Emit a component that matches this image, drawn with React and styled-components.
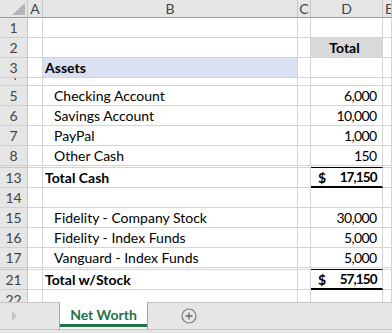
import styled, { createGlobalStyle } from "styled-components";

const Global = createGlobalStyle`
  html, body {
    margin: 0;
    padding: 0;
    background: #ffffff;
  }
  body {
    font-family: Lato, "Open Sans", "Liberation Sans", sans-serif;
  }
`;

const Page = styled.div`
  width: 392px;
  height: 333px;
  display: flex;
  flex-direction: column;
  overflow: hidden;
`;

const Sheet = styled.div`
  flex: 1;
  display: grid;
  grid-template-columns: 28px 15px 255px 13px 72px 1fr;
  grid-auto-rows: min-content;
  overflow: hidden;
`;

const Corner = styled.div`
  height: 18px;
  background: #e6e6e6;
  border-right: 1px solid #c6c6c6;
  border-bottom: 1px solid #9c9c9c;
  box-sizing: border-box;
  display: flex;
  align-items: flex-end;
  justify-content: flex-end;
  padding: 0 2px 2px 0;
`;

const ColHead = styled.div`
  height: 18px;
  background: #e6e6e6;
  border-right: 1px solid #c6c6c6;
  border-bottom: 1px solid #9c9c9c;
  box-sizing: border-box;
  display: flex;
  align-items: center;
  justify-content: ${({ $start }) => ($start ? "flex-start" : "center")};
  padding-left: ${({ $start }) => ($start ? "2px" : "0")};
  font-size: 14px;
  color: #444444;
  overflow: hidden;
`;

const RowHead = styled.div`
  height: ${({ $h }) => $h}px;
  background: #e6e6e6;
  border-right: 1px solid #c6c6c6;
  border-bottom: 1px solid ${({ $h }) => ($h < 6 ? "#c6c6c6" : "#d0d0d0")};
  box-sizing: border-box;
  display: flex;
  align-items: ${({ $h }) => ($h < 12 ? "flex-end" : "center")};
  justify-content: center;
  font-size: 14px;
  line-height: 20px;
  color: #444444;
  overflow: hidden;
`;

const Cell = styled.div`
  height: ${({ $h }) => $h}px;
  box-sizing: border-box;
  border-right: 1px solid #d4d4d4;
  border-bottom: ${({ $bottom }) => $bottom || "1px solid #d4d4d4"};
  background: ${({ $bg }) => $bg || "#ffffff"};
  display: flex;
  align-items: center;
  justify-content: ${({ $align }) =>
    $align === "right" ? "flex-end" : $align === "center" ? "center" : $align === "split" ? "space-between" : "flex-start"};
  padding: ${({ $pad }) => $pad || "0 2px"};
  font-size: 14px;
  font-weight: ${({ $bold }) => ($bold ? 700 : 400)};
  color: #000000;
  white-space: nowrap;
  overflow: hidden;
`;

const Num = styled.span`
  letter-spacing: ${({ $bold }) => ($bold ? "-0.9px" : "-0.6px")};
  font-size: ${({ $bold }) => ($bold ? "13.5px" : "14px")};
  margin-right: -0.6px;
`;

const TabBar = styled.div`
  height: 31px;
  flex-shrink: 0;
  display: flex;
  align-items: stretch;
  background: #e6e6e6;
  border-bottom: 3px solid #e6e6e6;
  box-sizing: border-box;
`;

const TabLead = styled.div`
  width: 59px;
  border-top: 1px solid #c6c6c6;
  border-bottom: 1px solid #c6c6c6;
  display: flex;
  align-items: center;
  justify-content: center;
  padding-right: 30px;
  box-sizing: border-box;
`;

const Tab = styled.div`
  width: 89px;
  background: #ffffff;
  border-left: 1px solid #a6a6a6;
  border-right: 1px solid #a6a6a6;
  box-sizing: border-box;
  display: flex;
  flex-direction: column;
  align-items: stretch;
  border-bottom: 1px solid #c6c6c6;
`;

const TabLabel = styled.div`
  flex: 1;
  display: flex;
  align-items: center;
  justify-content: center;
  font-size: 14px;
  font-weight: 700;
  color: #217346;
  padding-top: 2px;
`;

const TabLine = styled.div`
  height: 3px;
  margin: 0 0 2px;
  background: #217346;
`;

const TabRest = styled.div`
  flex: 1;
  border-top: 1px solid #c6c6c6;
  border-bottom: 1px solid #c6c6c6;
  display: flex;
  align-items: center;
  padding-left: 33px;
`;

const rows = [
  { n: "1", h: 20 },
  { n: "2", h: 20, d: "Total", dBold: true, dBg: "#d9d9d9", dAlign: "center" },
  { n: "3", h: 20, b: "Assets", bBold: true, bBg: "#d9e1f2" },
  { n: "4", h: 8 },
  { n: "5", h: 20, b: "Checking Account", indent: true, d: "6,000", num: true },
  { n: "6", h: 20, b: "Savings Account", indent: true, d: "10,000", num: true },
  { n: "7", h: 20, b: "PayPal", indent: true, d: "1,000", num: true },
  { n: "8", h: 20, b: "Other Cash", indent: true, d: "150", num: true },
  { n: "", h: 2, dBottomBlack: true },
  { n: "13", h: 20, b: "Total Cash", bBold: true, total: "17,150" },
  { n: "14", h: 20 },
  { n: "15", h: 20, b: "Fidelity  - Company Stock", indent: true, d: "30,000", num: true },
  { n: "16", h: 20, b: "Fidelity - Index Funds", indent: true, d: "5,000", num: true },
  { n: "17", h: 20, b: "Vanguard - Index Funds", indent: true, d: "5,000", num: true },
  { n: "", h: 2, dBottomBlack: true },
  { n: "21", h: 20, b: "Total w/Stock", bBold: true, total: "57,150" },
  { n: "22", h: 20 },
];

const Row = ({ r }) => {
  return (
    <>
      <RowHead $h={r.h}>{r.n}</RowHead>
      <Cell $h={r.h} />
      <Cell $h={r.h} $bg={r.bBg} $bold={r.bBold} $pad={r.indent ? "0 0 0 11px" : "0 2px"}>
        {r.b}
      </Cell>
      <Cell $h={r.h} />
      {r.total ? (
        <Cell $h={r.h} $bold $align="split" $bottom="2px solid #000000" $pad="0 6px 0 7px">
          <span>$</span>
          <Num $bold>{r.total}</Num>
        </Cell>
      ) : (
        <Cell
          $h={r.h}
          $bg={r.dBg}
          $bold={r.dBold}
          $align={r.dAlign || "right"}
          $pad="0 6px 0 2px"
          $bottom={r.dBottomBlack ? "1px solid #000000" : undefined}
        >
          {r.num ? <Num>{r.d}</Num> : r.d}
        </Cell>
      )}
      <Cell $h={r.h} />
    </>
  );
};

const App = () => {
  return (
    <Page>
      <Global />
      <Sheet>
        <Corner>
          <svg width="13" height="12" viewBox="0 0 13 12">
            <polygon points="13,0 13,12 0,12" fill="#b4b4b4" />
          </svg>
        </Corner>
        <ColHead>A</ColHead>
        <ColHead>B</ColHead>
        <ColHead>C</ColHead>
        <ColHead>D</ColHead>
        <ColHead $start>E</ColHead>
        {rows.map((r, i) => (
          <Row key={i} r={r} />
        ))}
      </Sheet>
      <TabBar>
        <TabLead>
          <svg width="6" height="10" viewBox="0 0 6 10">
            <polygon points="0,0 5,5 0,10" fill="#c4c4c4" />
          </svg>
        </TabLead>
        <Tab>
          <TabLabel>Net Worth</TabLabel>
          <TabLine />
        </Tab>
        <TabRest>
          <svg width="16" height="16" viewBox="0 0 16 16">
            <circle cx="8" cy="8" r="7" fill="none" stroke="#7a7a7a" strokeWidth="1.2" />
            <path d="M8 4.5v7M4.5 8h7" stroke="#6a6a6a" strokeWidth="1.4" />
          </svg>
        </TabRest>
      </TabBar>
    </Page>
  );
};

export default App;
